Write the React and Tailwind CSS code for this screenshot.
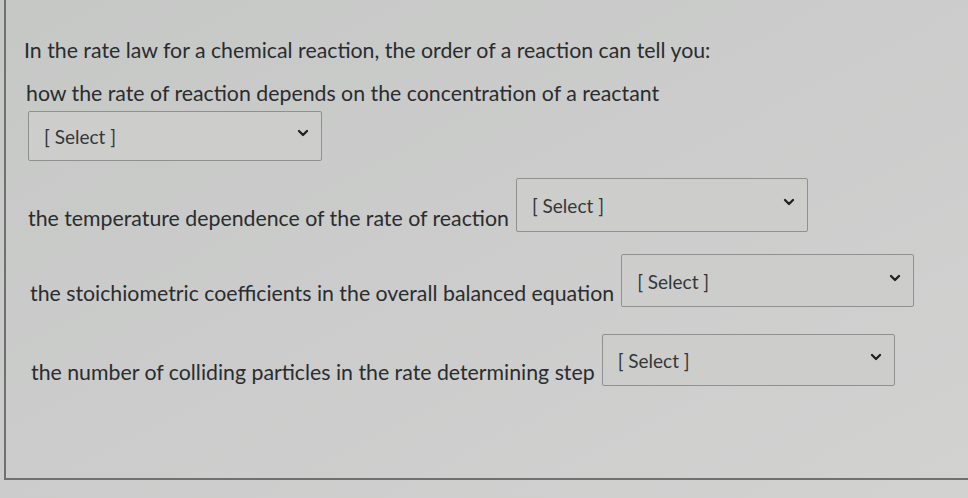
import React from 'react'
import { ChevronDown } from 'lucide-react'

const ROWS = [
    { text: 'the temperature dependence of the rate of reaction', pl: 'pl-[22px]', mt: 'mt-[17px]', h: 'h-[54px]', w: 'w-[292px]', tm: 'mt-[26px]' },
    { text: 'the stoichiometric coefficients in the overall balanced equation', pl: 'pl-[24px]', mt: 'mt-[22px]', h: 'h-[53px]', w: 'w-[293px]', tm: 'mt-[25px]' },
    { text: 'the number of colliding particles in the rate determining step', pl: 'pl-[25px]', mt: 'mt-[27px]', h: 'h-[52px]', w: 'w-[293px]', tm: 'mt-[24px]' }
]

function SelectBox({ className }) {
    return (
        <div className={`flex items-center justify-between border border-[#8f918f] rounded-[2px] bg-[#cdcecc] pl-[15px] pr-[10px] ${className}`}>
            <span className="text-[19px] text-[#34373a] mt-[3px]">[ Select ]</span>
            <ChevronDown size={16} strokeWidth={3.5} className="text-[#1f2224] -mt-[6px]" />
        </div>
    )
}

export default function App() {
    return (
        <div
            className="w-[968px] h-[498px] overflow-hidden bg-gradient-to-br from-[#c6c8c6] via-[#cbcccb] to-[#d2d3d1]"
            style={{ fontFamily: 'Lato, "Open Sans", sans-serif' }}
        >
            <div className="ml-[4px] h-[480px] border-l-2 border-b-2 border-[#6f716f] text-[#2a2d2f]">
                <div className="pl-[18px] pt-[36px] text-[21.3px] leading-[28px]">
                    In the rate law for a chemical reaction, the order of a reaction can tell you:
                </div>

                <div className="pl-[20px] mt-[15px] text-[21.3px] leading-[28px]">
                    how the rate of reaction depends on the concentration of a reactant
                </div>

                <div className="pl-[22px] mt-[4px]">
                    <SelectBox className="w-[294px] h-[50px]" />
                </div>

                {ROWS.map((r) => (
                    <div key={r.text} className={`flex items-start gap-[7px] ${r.pl} ${r.mt}`}>
                        <div className={`text-[21.3px] leading-[28px] ${r.tm}`}>{r.text}</div>
                        <SelectBox className={`${r.w} ${r.h}`} />
                    </div>
                ))}
            </div>
        </div>
    )
}
